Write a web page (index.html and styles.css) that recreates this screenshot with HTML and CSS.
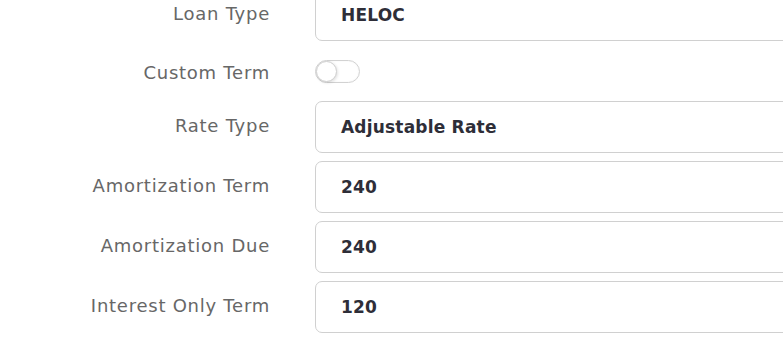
FILE: index.html
```html
<!DOCTYPE html>
<html>
<head>
<meta charset="utf-8">
<link rel="stylesheet" href="styles.css">
</head>
<body>
<div class="form">
  <div class="row">
    <div class="label">Loan Type</div>
    <div class="field">HELOC</div>
  </div>
  <div class="row row-toggle">
    <div class="label">Custom Term</div>
    <div class="toggle-wrap"><span class="toggle"><span class="knob"></span></span></div>
  </div>
  <div class="row">
    <div class="label">Rate Type</div>
    <div class="field">Adjustable Rate</div>
  </div>
  <div class="row">
    <div class="label">Amortization Term</div>
    <div class="field">240</div>
  </div>
  <div class="row">
    <div class="label">Amortization Due</div>
    <div class="field">240</div>
  </div>
  <div class="row">
    <div class="label">Interest Only Term</div>
    <div class="field">120</div>
  </div>
</div>
</body>
</html>
```

FILE: styles.css
```css
html, body {
  margin: 0;
  padding: 0;
  background: #ffffff;
  overflow: hidden;
}
body {
  width: 783px;
  height: 337px;
  font-family: "DejaVu Sans", "Noto Sans", sans-serif;
}
.form {
  margin-top: -11px;
  display: flex;
  flex-direction: column;
  gap: 8px;
  width: 783px;
  overflow: hidden;
}
.row {
  display: grid;
  grid-template-columns: 270px 468px;
  column-gap: 45px;
  align-items: center;
  height: 52px;
}
.row-toggle {
  height: 44px;
}
.label {
  text-align: right;
  color: #676767;
  font-size: 18px;
  letter-spacing: 0.75px;
  padding-bottom: 3px;
}
.row-toggle .label {
  padding-bottom: 0;
  padding-top: 3px;
}
.field {
  box-sizing: border-box;
  height: 52px;
  width: 480px;
  border: 1px solid #d0d0d0;
  border-radius: 7px;
  padding-left: 25px;
  display: flex;
  align-items: center;
  color: #2e2e38;
  font-weight: 700;
  font-size: 17px;
  letter-spacing: 0.2px;
}
.toggle-wrap {
  display: flex;
  align-items: center;
}
.toggle {
  box-sizing: border-box;
  position: relative;
  width: 45px;
  height: 23px;
  border: 1px solid #d2d2d2;
  border-radius: 12px;
  background: #ffffff;
  box-shadow: inset 0 0 2px rgba(0,0,0,0.06);
}
.knob {
  position: absolute;
  left: 0;
  top: 0;
  box-sizing: border-box;
  width: 21px;
  height: 21px;
  border-radius: 50%;
  border: 1px solid #cfcfcf;
  background: #ffffff;
  box-shadow: 1px 1px 3px rgba(0,0,0,0.12);
}
```
